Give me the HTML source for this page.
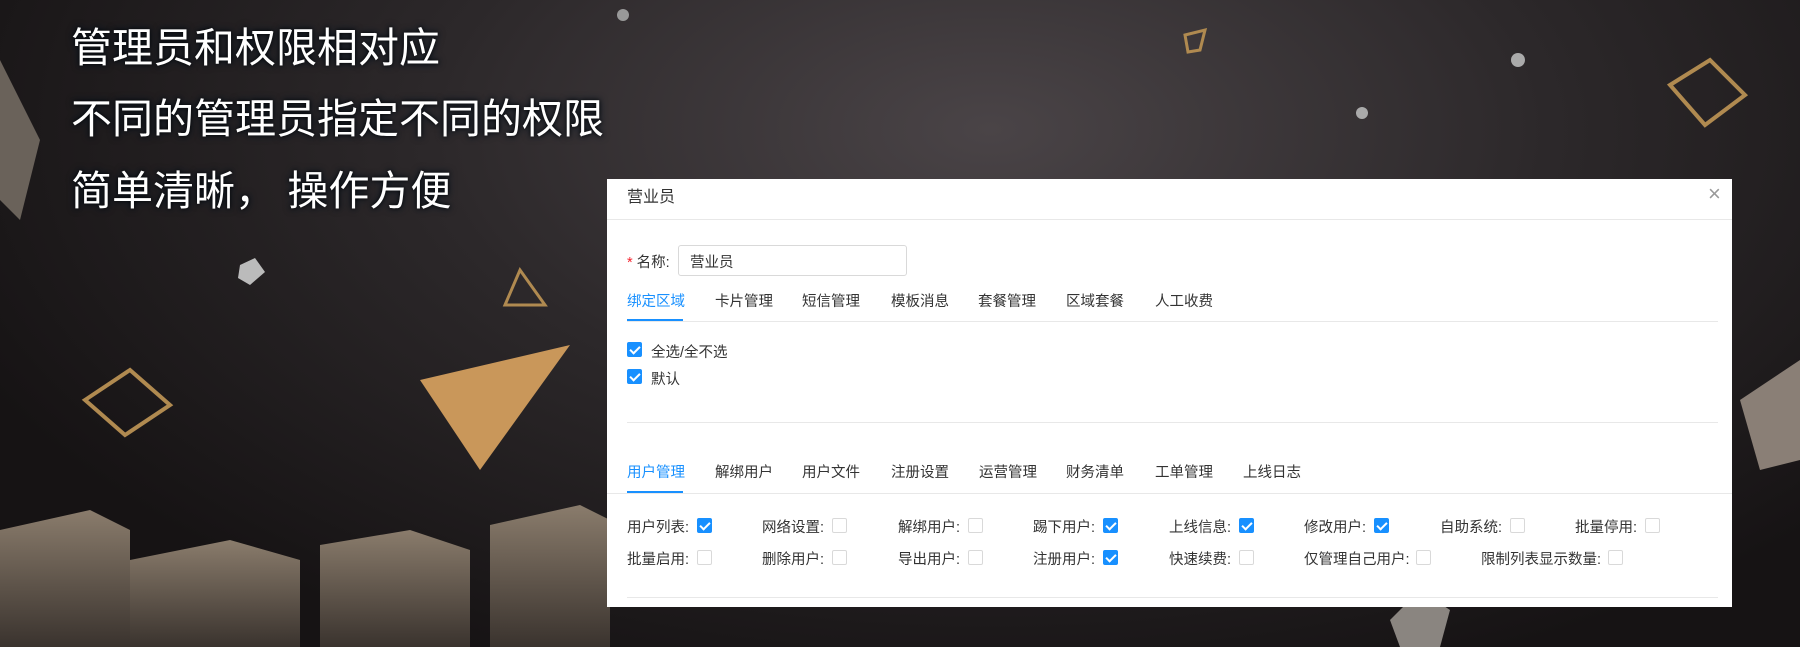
<!DOCTYPE html>
<html><head><meta charset="utf-8"><style>
*{margin:0;padding:0;box-sizing:border-box}
body{width:1800px;height:647px;overflow:hidden;position:relative;font-family:"Liberation Sans","Noto Sans CJK SC",sans-serif;background:radial-gradient(ellipse at 55% 20%,#4a4447 0%,#2c282a 40%,#161314 80%)}
.a{position:absolute;white-space:nowrap}
.h{color:#fff;font-size:41px;left:71px;text-shadow:0 0 4px #000,0 0 8px #0a1a2a}
.p{position:absolute;left:607px;top:179px;width:1125px;height:428px;background:#fff}
.t{font-size:14.5px;color:#333}
.blue{color:#1890ff}
.ln{position:absolute;height:1px;background:#e8e8e8}
.cb{position:absolute;width:15px;height:15px;border:1px solid #d9d9d9;border-radius:2px;background:#fff}
.cb.on{background:#1890ff;border-color:#1890ff}
.cb.on:after{content:"";position:absolute;left:4px;top:1px;width:4px;height:8px;border:solid #fff;border-width:0 2px 2px 0;transform:rotate(45deg)}
</style></head><body>
<svg class="a" style="left:0;top:0" width="1800" height="647">
<defs><linearGradient id="g" x1="0" y1="0" x2="0" y2="1"><stop offset="0" stop-color="#8a7c6c"/><stop offset="1" stop-color="#3a332e"/></linearGradient></defs>
<polygon points="0,530 90,510 130,530 130,647 0,647" fill="url(#g)"/>
<polygon points="130,560 230,540 300,560 300,647 130,647" fill="url(#g)"/>
<polygon points="320,545 410,530 470,550 470,647 320,647" fill="url(#g)"/>
<polygon points="490,525 580,505 610,520 610,647 490,647" fill="url(#g)"/>
<polygon points="420,380 570,345 480,470" fill="#c9975a"/>
<polygon points="0,60 40,140 20,220 0,200" fill="#6a625a"/>
<polygon points="85,400 130,370 170,405 125,435" fill="none" stroke="#b08a50" stroke-width="4"/>
<polygon points="1670,85 1710,60 1745,95 1705,125" fill="none" stroke="#b08a50" stroke-width="4"/>
<polygon points="1185,35 1205,30 1200,50 1188,52" fill="none" stroke="#b08a50" stroke-width="3"/>
<polygon points="505,305 520,270 545,305" fill="none" stroke="#b08a50" stroke-width="3"/>
<polygon points="1740,400 1800,360 1800,460 1760,470" fill="#8a7f76"/>
<polygon points="1390,620 1420,590 1450,610 1440,647 1400,647" fill="#8a8580"/>
<circle cx="623" cy="15" r="6" fill="#999"/><circle cx="1518" cy="60" r="7" fill="#aaa"/><circle cx="1362" cy="113" r="6" fill="#aaa"/>
<polygon points="240,265 255,258 265,272 250,285 238,278" fill="#bbb"/>
</svg>
<div class="a h" style="top:14px">管理员和权限相对应</div>
<div class="a h" style="top:85px">不同的管理员指定不同的权限</div>
<div class="a h" style="top:157px">简单清晰，  操作方便</div>
<div class="p"></div>
<div class="a t" style="left:627px;top:183px;font-size:16px">营业员</div>
<div class="a" style="left:1708px;top:181px;font-size:22px;color:#999;font-weight:300">×</div>
<div class="ln" style="left:607px;top:219px;width:1125px"></div>
<div class="a t" style="left:627px;top:251px"><span style="color:#f5222d">*</span> 名称:</div>
<div class="a" style="left:678px;top:245px;width:229px;height:31px;border:1px solid #d9d9d9;border-radius:3px"></div>
<div class="a t" style="left:690px;top:251px">营业员</div>
<div class="a t blue" style="left:627px;top:290px">绑定区域</div>
<div class="a t" style="left:715px;top:290px">卡片管理</div>
<div class="a t" style="left:802px;top:290px">短信管理</div>
<div class="a t" style="left:891px;top:290px">模板消息</div>
<div class="a t" style="left:978px;top:290px">套餐管理</div>
<div class="a t" style="left:1066px;top:290px">区域套餐</div>
<div class="a t" style="left:1155px;top:290px">人工收费</div>
<div class="ln" style="left:627px;top:321px;width:1091px"></div>
<div class="a" style="left:627px;top:319px;width:56px;height:2px;background:#1890ff"></div>
<div class="cb on" style="left:627px;top:342px"></div><div class="a t" style="left:651px;top:341px">全选/全不选</div>
<div class="cb on" style="left:627px;top:369px"></div><div class="a t" style="left:651px;top:368px">默认</div>
<div class="ln" style="left:627px;top:422px;width:1091px"></div>
<div class="a t blue" style="left:627px;top:461px">用户管理</div>
<div class="a t" style="left:715px;top:461px">解绑用户</div>
<div class="a t" style="left:802px;top:461px">用户文件</div>
<div class="a t" style="left:891px;top:461px">注册设置</div>
<div class="a t" style="left:979px;top:461px">运营管理</div>
<div class="a t" style="left:1066px;top:461px">财务清单</div>
<div class="a t" style="left:1155px;top:461px">工单管理</div>
<div class="a t" style="left:1243px;top:461px">上线日志</div>
<div class="ln" style="left:607px;top:493px;width:1125px"></div>
<div class="a" style="left:627px;top:491px;width:56px;height:2px;background:#1890ff"></div>
<div class="a t" style="left:627px;top:516px">用户列表:</div><div class="cb on" style="left:697px;top:518px"></div>
<div class="a t" style="left:762px;top:516px">网络设置:</div><div class="cb" style="left:832px;top:518px"></div>
<div class="a t" style="left:898px;top:516px">解绑用户:</div><div class="cb" style="left:968px;top:518px"></div>
<div class="a t" style="left:1033px;top:516px">踢下用户:</div><div class="cb on" style="left:1103px;top:518px"></div>
<div class="a t" style="left:1169px;top:516px">上线信息:</div><div class="cb on" style="left:1239px;top:518px"></div>
<div class="a t" style="left:1304px;top:516px">修改用户:</div><div class="cb on" style="left:1374px;top:518px"></div>
<div class="a t" style="left:1440px;top:516px">自助系统:</div><div class="cb" style="left:1510px;top:518px"></div>
<div class="a t" style="left:1575px;top:516px">批量停用:</div><div class="cb" style="left:1645px;top:518px"></div>
<div class="a t" style="left:627px;top:548px">批量启用:</div><div class="cb" style="left:697px;top:550px"></div>
<div class="a t" style="left:762px;top:548px">删除用户:</div><div class="cb" style="left:832px;top:550px"></div>
<div class="a t" style="left:898px;top:548px">导出用户:</div><div class="cb" style="left:968px;top:550px"></div>
<div class="a t" style="left:1033px;top:548px">注册用户:</div><div class="cb on" style="left:1103px;top:550px"></div>
<div class="a t" style="left:1169px;top:548px">快速续费:</div><div class="cb" style="left:1239px;top:550px"></div>
<div class="a t" style="left:1304px;top:548px">仅管理自己用户:</div><div class="cb" style="left:1416px;top:550px"></div>
<div class="a t" style="left:1481px;top:548px">限制列表显示数量:</div><div class="cb" style="left:1608px;top:550px"></div>
<div class="ln" style="left:627px;top:597px;width:1091px"></div>
</body></html>
